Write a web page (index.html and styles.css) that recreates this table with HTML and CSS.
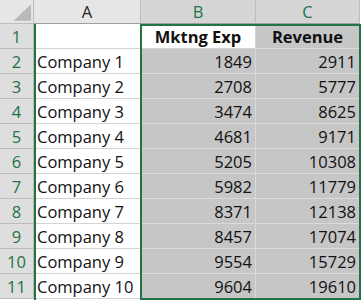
FILE: index.html
```html
<!DOCTYPE html>
<html lang="en">
<head>
  <meta charset="UTF-8">
  <meta name="viewport" content="width=device-width, initial-scale=1.0">
  <title>Sheet</title>
  <link rel="stylesheet" href="styles.css">
</head>
<body>
  <div class="sheet-wrap">
    <div class="sheet">
      <div class="hd corner">
        <svg width="34" height="24" viewBox="0 0 34 24"><polygon points="14,21 32,21 32,4" fill="#b9b9b9"/></svg>
      </div>
      <div class="hd col">A</div>
      <div class="hd col on">B</div>
      <div class="hd col on">C</div>

      <div class="hd row">1</div>
      <div class="cell txt"></div>
      <div class="cell title active">Mktng Exp</div>
      <div class="cell title sel">Revenue</div>

      <div class="hd row">2</div>
      <div class="cell txt">Company 1</div>
      <div class="cell num sel">1849</div>
      <div class="cell num sel">2911</div>

      <div class="hd row">3</div>
      <div class="cell txt">Company 2</div>
      <div class="cell num sel">2708</div>
      <div class="cell num sel">5777</div>

      <div class="hd row">4</div>
      <div class="cell txt">Company 3</div>
      <div class="cell num sel">3474</div>
      <div class="cell num sel">8625</div>

      <div class="hd row">5</div>
      <div class="cell txt">Company 4</div>
      <div class="cell num sel">4681</div>
      <div class="cell num sel">9171</div>

      <div class="hd row">6</div>
      <div class="cell txt">Company 5</div>
      <div class="cell num sel">5205</div>
      <div class="cell num sel">10308</div>

      <div class="hd row">7</div>
      <div class="cell txt">Company 6</div>
      <div class="cell num sel">5982</div>
      <div class="cell num sel">11779</div>

      <div class="hd row">8</div>
      <div class="cell txt">Company 7</div>
      <div class="cell num sel">8371</div>
      <div class="cell num sel">12138</div>

      <div class="hd row">9</div>
      <div class="cell txt">Company 8</div>
      <div class="cell num sel">8457</div>
      <div class="cell num sel">17074</div>

      <div class="hd row">10</div>
      <div class="cell txt">Company 9</div>
      <div class="cell num sel">9554</div>
      <div class="cell num sel">15729</div>

      <div class="hd row">11</div>
      <div class="cell txt">Company 10</div>
      <div class="cell num sel">9604</div>
      <div class="cell num sel">19610</div>
    </div>

    <!-- selection outlines -->
    <div class="range-a"></div>
    <div class="range-bc"></div>
  </div>
</body>
</html>
```

FILE: styles.css
```css
/* excel like sheet */
body {
  margin: 0;
  background-color: #fff;
  font-family: "Open Sans", "Liberation Sans", sans-serif;
  font-size: 16.5px;
  color: #111;
}
.sheet-wrap {
  position: relative;
  width: 362px;
  height: 300px;
  overflow: hidden;
}
.sheet {
  display: grid;
  grid-template-columns: 34px 107px 115px 104px;
  grid-template-rows: 24px repeat(11, 25px);
}
.sheet > div {
  box-sizing: border-box;
  border-right: 1px solid #d4d4d4;
  border-bottom: 1px solid #d4d4d4;
  white-space: nowrap;
  overflow: hidden;
  display: flex;
  align-items: center;
}
.hd {
  background-color: #e6e6e6;
  justify-content: center;
  color: #262626;
}
.sheet > .hd {
  border-color: #bcbcbc;
}
.corner svg {
  display: block;
}
.col.on {
  background-color: #d5d5d5;
  color: #217346;
}
.sheet > .col {
  border-bottom-color: #9f9f9f;
}
.row {
  background-color: #dedede;
  color: #217346;
}
.cell {
  background-color: #fff;
}
.txt {
  padding-left: 3px;
}
.num {
  justify-content: flex-end;
  padding-right: 3px;
}
.title {
  justify-content: center;
  font-weight: bold;
}
.sel {
  background-color: #c6c6c6;
}
.sheet > .sel {
  border-color: #dadada;
}
.active {
  background-color: #fff;
}
.range-a {
  position: absolute;
  left: 34px;
  top: 24px;
  width: 2px;
  height: 276px;
  background-color: #217346;
}
.range-bc {
  position: absolute;
  left: 140px;
  top: 24px;
  width: 221px;
  height: 276px;
  box-sizing: border-box;
  border: 2px solid #217346;
}
```
